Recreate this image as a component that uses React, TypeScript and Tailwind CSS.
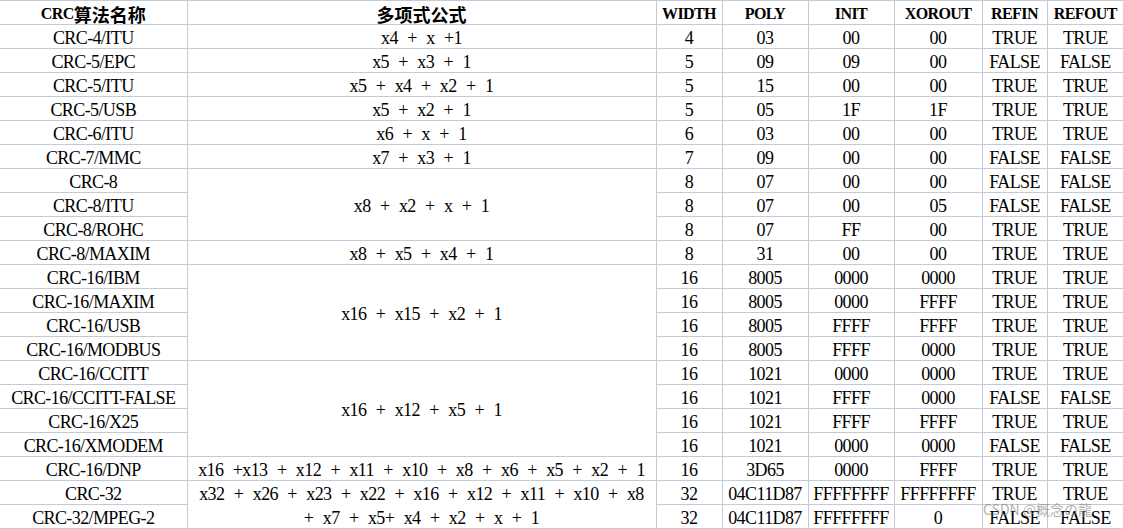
import React from "react";

interface CrcRow {
  name: string;
  formula?: string[];
  span?: number;
  width: string;
  poly: string;
  init: string;
  xorout: string;
  refin: string;
  refout: string;
}

// formula is only set on the first row of a merged block
const rows: CrcRow[] = [
  { name: "CRC-4/ITU", formula: ["x4 + x +1"], width: "4", poly: "03", init: "00", xorout: "00", refin: "TRUE", refout: "TRUE" },
  { name: "CRC-5/EPC", formula: ["x5 + x3 + 1"], width: "5", poly: "09", init: "09", xorout: "00", refin: "FALSE", refout: "FALSE" },
  { name: "CRC-5/ITU", formula: ["x5 + x4 + x2 + 1"], width: "5", poly: "15", init: "00", xorout: "00", refin: "TRUE", refout: "TRUE" },
  { name: "CRC-5/USB", formula: ["x5 + x2 + 1"], width: "5", poly: "05", init: "1F", xorout: "1F", refin: "TRUE", refout: "TRUE" },
  { name: "CRC-6/ITU", formula: ["x6 + x + 1"], width: "6", poly: "03", init: "00", xorout: "00", refin: "TRUE", refout: "TRUE" },
  { name: "CRC-7/MMC", formula: ["x7 + x3 + 1"], width: "7", poly: "09", init: "00", xorout: "00", refin: "FALSE", refout: "FALSE" },
  { name: "CRC-8", formula: ["x8 + x2 + x + 1"], span: 3, width: "8", poly: "07", init: "00", xorout: "00", refin: "FALSE", refout: "FALSE" },
  { name: "CRC-8/ITU", width: "8", poly: "07", init: "00", xorout: "05", refin: "FALSE", refout: "FALSE" },
  { name: "CRC-8/ROHC", width: "8", poly: "07", init: "FF", xorout: "00", refin: "TRUE", refout: "TRUE" },
  { name: "CRC-8/MAXIM", formula: ["x8 + x5 + x4 + 1"], width: "8", poly: "31", init: "00", xorout: "00", refin: "TRUE", refout: "TRUE" },
  { name: "CRC-16/IBM", formula: ["x16 + x15 + x2 + 1"], span: 4, width: "16", poly: "8005", init: "0000", xorout: "0000", refin: "TRUE", refout: "TRUE" },
  { name: "CRC-16/MAXIM", width: "16", poly: "8005", init: "0000", xorout: "FFFF", refin: "TRUE", refout: "TRUE" },
  { name: "CRC-16/USB", width: "16", poly: "8005", init: "FFFF", xorout: "FFFF", refin: "TRUE", refout: "TRUE" },
  { name: "CRC-16/MODBUS", width: "16", poly: "8005", init: "FFFF", xorout: "0000", refin: "TRUE", refout: "TRUE" },
  { name: "CRC-16/CCITT", formula: ["x16 + x12 + x5 + 1"], span: 4, width: "16", poly: "1021", init: "0000", xorout: "0000", refin: "TRUE", refout: "TRUE" },
  { name: "CRC-16/CCITT-FALSE", width: "16", poly: "1021", init: "FFFF", xorout: "0000", refin: "FALSE", refout: "FALSE" },
  { name: "CRC-16/X25", width: "16", poly: "1021", init: "FFFF", xorout: "FFFF", refin: "TRUE", refout: "TRUE" },
  { name: "CRC-16/XMODEM", width: "16", poly: "1021", init: "0000", xorout: "0000", refin: "FALSE", refout: "FALSE" },
  { name: "CRC-16/DNP", formula: ["x16 +x13 + x12 + x11 + x10 + x8 + x6 + x5 + x2 + 1"], width: "16", poly: "3D65", init: "0000", xorout: "FFFF", refin: "TRUE", refout: "TRUE" },
  {
    name: "CRC-32",
    formula: ["x32 + x26 + x23 + x22 + x16 + x12 + x11 + x10 + x8", "+ x7 + x5+ x4 + x2 + x + 1"],
    span: 2,
    width: "32",
    poly: "04C11D87",
    init: "FFFFFFFF",
    xorout: "FFFFFFFF",
    refin: "TRUE",
    refout: "TRUE",
  },
  { name: "CRC-32/MPEG-2", width: "32", poly: "04C11D87", init: "FFFFFFFF", xorout: "0", refin: "FALSE", refout: "FALSE" },
];

const td = "border border-[#c5cad9] p-0 text-center align-middle";
const line = "h-[23px] pt-[4px] leading-[19px] whitespace-pre overflow-hidden";

const Cell: React.FC<{ children: React.ReactNode; className?: string }> = ({ children, className = "" }) => (
  <td className={`${td} ${className}`}>
    <div className={line}>{children}</div>
  </td>
);

const Head: React.FC<{ children: React.ReactNode; className?: string }> = ({ children, className = "" }) => (
  <th className={`${td} ${className}`}>
    <div className="h-[23px] pt-[2px] flex items-center justify-center font-bold text-[16px] leading-[20px] tracking-[-0.6px] whitespace-nowrap">
      {children}
    </div>
  </th>
);

const Cjk: React.FC<{ children: React.ReactNode }> = ({ children }) => (
  <span className="font-['Noto_Sans_CJK_SC',sans-serif] text-[18px] leading-[20px] tracking-normal">{children}</span>
);

export default function App() {
  return (
    <div className="relative w-[1123px] h-[529px] overflow-hidden bg-white text-black">
      <table className="table-fixed border-collapse w-[1123px] font-['Liberation_Serif','Noto_Sans_CJK_SC',serif] text-[18px] tracking-[-0.6px] [word-spacing:5.5px]">
        <colgroup>
          <col className="w-[187px]" />
          <col className="w-[469px]" />
          <col className="w-[66px]" />
          <col className="w-[86px]" />
          <col className="w-[86px]" />
          <col className="w-[88px]" />
          <col className="w-[65px]" />
          <col className="w-[76px]" />
        </colgroup>
        <thead>
          <tr>
            <Head className="border-l-0">
              CRC<Cjk>算法名称</Cjk>
            </Head>
            <Head>
              <Cjk>多项式公式</Cjk>
            </Head>
            <Head>WIDTH</Head>
            <Head>POLY</Head>
            <Head>INIT</Head>
            <Head>XOROUT</Head>
            <Head>REFIN</Head>
            <Head className="border-r-0">REFOUT</Head>
          </tr>
        </thead>
        <tbody>
          {rows.map((r) => (
            <tr key={r.name}>
              <Cell className="border-l-0">{r.name}</Cell>
              {r.formula && (
                <td className={td} rowSpan={r.span ?? 1}>
                  <div className={line}>{r.formula[0]}</div>
                  {r.formula[1] && <div className={`${line} h-[24px] pt-[5px]`}>{r.formula[1]}</div>}
                </td>
              )}
              <Cell>{r.width}</Cell>
              <Cell>{r.poly}</Cell>
              <Cell>{r.init}</Cell>
              <Cell>{r.xorout}</Cell>
              <Cell>{r.refin}</Cell>
              <Cell className="border-r-0">{r.refout}</Cell>
            </tr>
          ))}
        </tbody>
      </table>

      {/* blog watermark */}
      <div className="absolute left-[983px] top-[500px] font-['Noto_Sans_CJK_SC',sans-serif] text-[14px] leading-[18px] text-[#8c8c8c]/70 pointer-events-none">
        CSDN @概念の龍
      </div>
    </div>
  );
}
